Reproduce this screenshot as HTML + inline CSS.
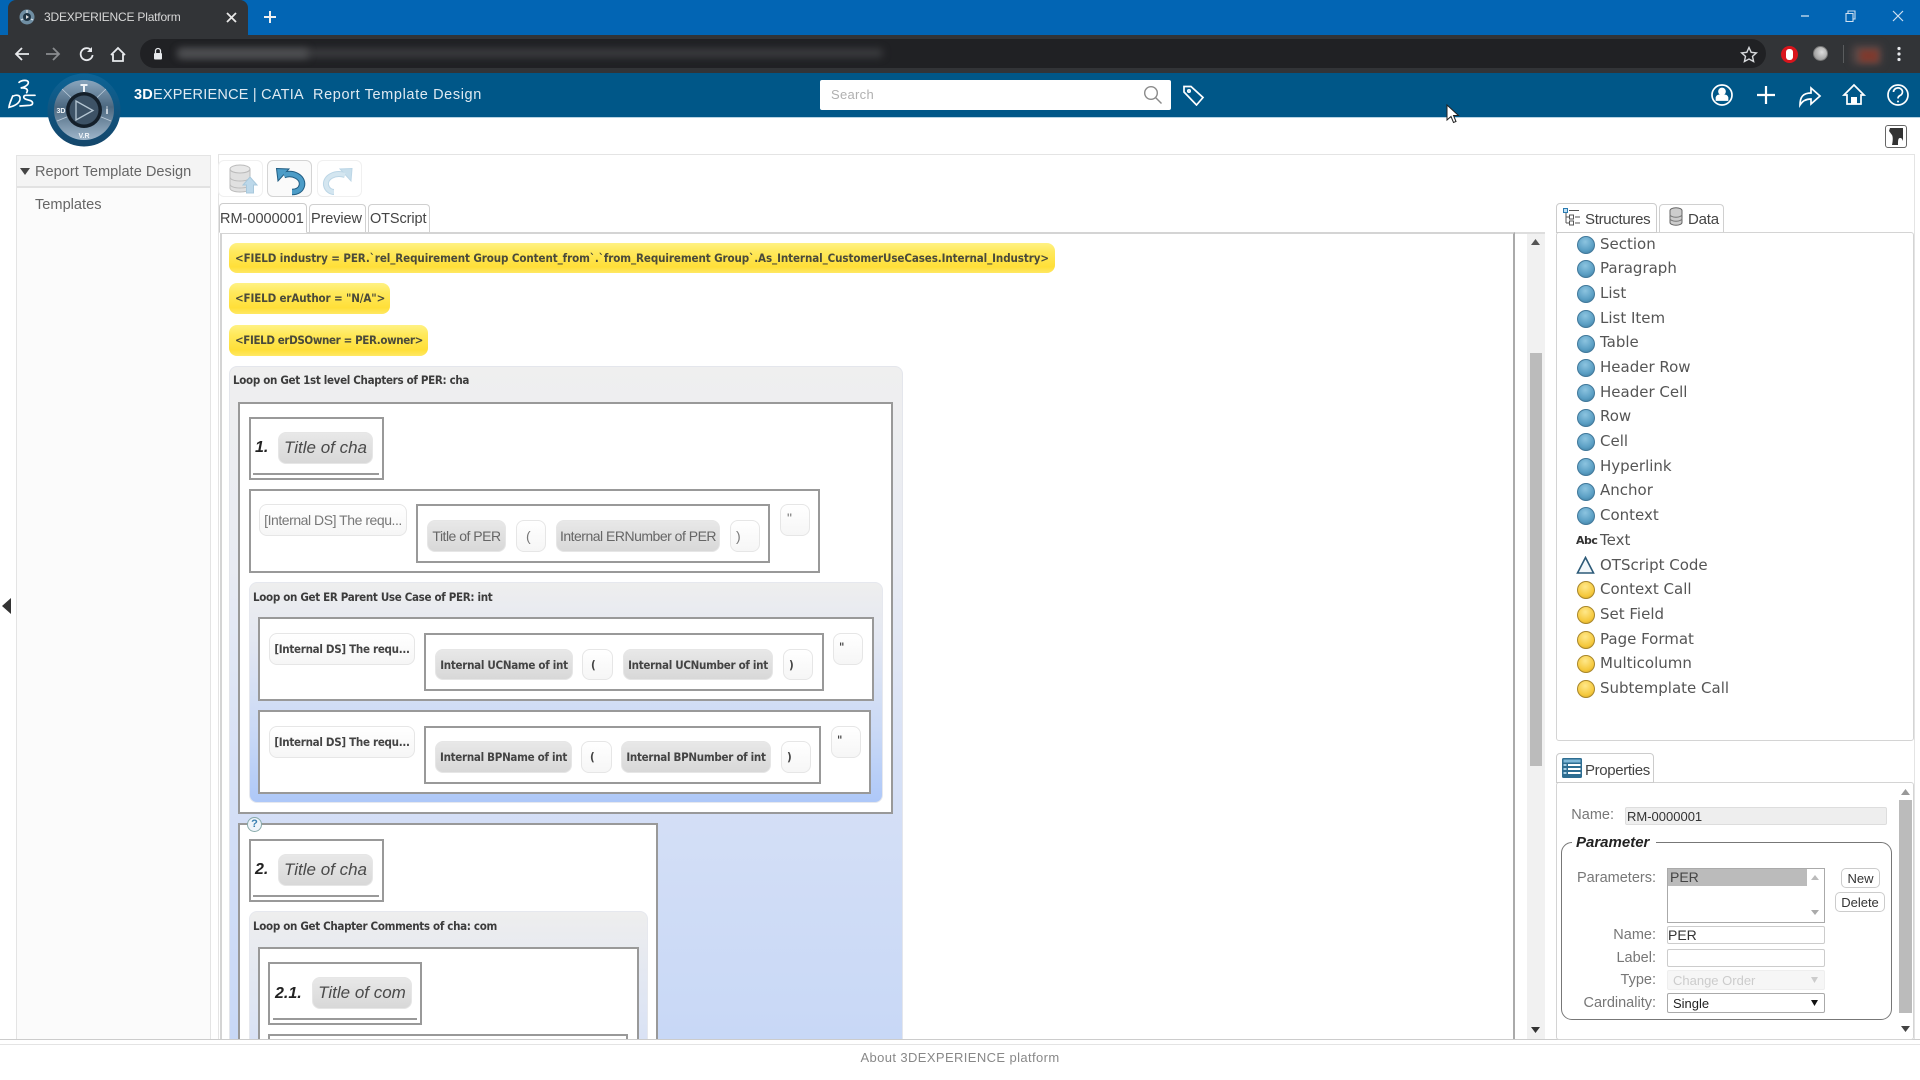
<!DOCTYPE html>
<html><head><meta charset="utf-8"><title>3DEXPERIENCE Platform</title>
<style>
html,body{margin:0;padding:0;width:1920px;height:1080px;overflow:hidden;background:#fff;font-family:"Liberation Sans",sans-serif}
div,span.a,svg.a{position:absolute;box-sizing:border-box;white-space:nowrap}
.cond{font-family:"DejaVu Sans Condensed","DejaVu Sans",sans-serif;font-stretch:condensed;font-weight:bold;font-size:11.5px;color:#3c3c3c;letter-spacing:-.32px}
.field{left:229px;border-radius:8px;background:linear-gradient(#fff284,#ffe95c 30%,#ffdf38 80%,#ffe864);padding-left:6px;line-height:30px;color:#4a4a3a}
.box{background:#fff;border:2px solid #999}
.pg{background:linear-gradient(#e8e8e8,#d8d8d8);border:1px solid #e6e6e6;border-radius:8px;text-align:center;color:#666;font-size:14px;line-height:30px;letter-spacing:-.5px}
.pw{background:linear-gradient(#fff,#f6f6f6);border:1px solid #e6e6e6;border-radius:8px;color:#777;font-size:14px;line-height:30px;letter-spacing:-.46px}
.pc{font-size:11.5px;color:#444;font-family:"DejaVu Sans Condensed","DejaVu Sans",sans-serif;font-stretch:condensed;font-weight:bold;letter-spacing:-.29px}
.tt{font:italic 17px/30px "Liberation Sans",sans-serif;color:#4a4a4a;text-align:center;letter-spacing:0}
.num{font:italic bold 16px/20px "Liberation Sans",sans-serif;color:#222}
.ul{height:2px;background:#999}
.tab{border:1px solid #d0d0d0;border-bottom:none;border-radius:4px 4px 0 0;background:#fff;font-size:14.5px;color:#444;padding-left:1px;letter-spacing:-.1px}
.li{left:1600px;font:15px/20px "DejaVu Sans",sans-serif;color:#555}
.b{left:1577px;width:18px;height:18px;border-radius:50%;background:radial-gradient(circle at 45% 30%,#8cc4e0,#5b9fc4 60%,#3a7699);border:1px solid #41789a}
.y{left:1577px;width:18px;height:18px;border-radius:50%;background:radial-gradient(circle at 45% 30%,#ffe88a,#f5c83c 65%,#c79a1c);border:1px solid #a8862a}
.lb{font-size:14.5px;color:#777;text-align:right;width:100px;left:1556px;line-height:18px}
.ip{left:1667px;width:158px;border:1px solid #ccc;border-radius:2px;background:#fff;font-size:14px;color:#333;padding-left:0}
</style></head><body>

<!-- Title bar -->
<div style="left:0;top:0;width:1920px;height:35px;background:#0265b4"></div>
<div style="left:8px;top:0;width:240px;height:35px;background:#323437;border-radius:8px 8px 0 0"></div>
<svg class="a" style="left:19px;top:9px" width="16" height="16" viewBox="0 0 16 16"><circle cx="8" cy="8" r="7.5" fill="#6f8ea3"/><circle cx="8" cy="8" r="4" fill="#1f3342"/><path d="M7 6v4l3-2z" fill="#ddd"/><path d="M8 1v3M2 11l2-1M14 11l-2-1" stroke="#dfe7ee" stroke-width="1.2"/></svg>
<div style="left:44px;top:9px;font-size:12px;line-height:17px;color:#d8d8d8;letter-spacing:-.2px">3DEXPERIENCE Platform</div>
<svg class="a" style="left:226px;top:12px" width="11" height="11"><path d="M1 1l9 9M10 1l-9 9" stroke="#e8e8e8" stroke-width="1.8"/></svg>
<svg class="a" style="left:264px;top:11px" width="12" height="12"><path d="M6 0v12M0 6h12" stroke="#f0f0f0" stroke-width="2"/></svg>
<svg class="a" style="left:1798px;top:9px" width="110" height="16" fill="none" stroke="#cfe0f0"><path d="M3 7h8" stroke-width="1.3"/><path d="M48 4.500h7v8h-7zM50 4.500v-2.500h7v8h-2" stroke-width="1.1"/><path d="M95 2l10 10M105 2l-10 10" stroke-width="1.2"/></svg>

<!-- Browser toolbar -->
<div style="left:0;top:35px;width:1920px;height:38px;background:#323437"></div>
<div style="left:140px;top:39px;width:1626px;height:29px;background:#202124;border-radius:15px"></div>
<svg class="a" style="left:12px;top:44px" width="120" height="20" fill="none" stroke="#e8eaed" stroke-width="1.8"><path d="M17 10H4M10 4l-6 6 6 6"/><path d="M34 10h13M41 4l6 6-6 6" stroke="#8a8c8f"/><path d="M79 6a6 6 0 1 0 1.600 5"/><path d="M80 3v5h-5" fill="#e8eaed" stroke="none"/><path d="M113 11l-7-7-7 7M101 10v7h10v-7"/></svg>
<svg class="a" style="left:153px;top:47px" width="10" height="13"><path d="M2.500 6V4a2.500 2.500 0 0 1 5 0v2" fill="none" stroke="#e8eaed" stroke-width="1.300"/><rect x="1" y="6" width="8" height="6.500" rx="1" fill="#e8eaed"/></svg>
<div style="left:178px;top:49px;width:705px;height:8px;background:#3e3f42;filter:blur(4px);border-radius:4px"></div>
<div style="left:178px;top:49px;width:130px;height:9px;background:#505154;filter:blur(4px)"></div>
<svg class="a" style="left:1740px;top:46px" width="18" height="17"><path d="M9 1.500l2.200 4.800 5.200.6-3.900 3.500 1.100 5.100L9 13l-4.600 2.500 1.100-5.100L1.600 6.900l5.200-.6z" fill="none" stroke="#d8dadd" stroke-width="1.400"/></svg>
<div style="left:1781px;top:46px;width:17px;height:17px;border-radius:50%;background:#d9141c"></div>
<div style="left:1786px;top:49px;width:7px;height:11px;border-radius:3px;background:#fff"></div>
<div style="left:1813px;top:46px;width:15px;height:15px;border-radius:50%;background:radial-gradient(circle at 60% 40%,#ddd,#888);border:1px solid #777"></div>
<div style="left:1843px;top:45px;width:1px;height:18px;background:#5a5c5f"></div>
<div style="left:1853px;top:46px;width:28px;height:18px;background:#5e4a48;filter:blur(4px)"></div>
<div style="left:1860px;top:50px;width:18px;height:12px;background:#7e3a2e;filter:blur(3px)"></div>
<svg class="a" style="left:1897px;top:46px" width="4" height="16"><circle cx="2" cy="2.500" r="1.600" fill="#e8eaed"/><circle cx="2" cy="8" r="1.600" fill="#e8eaed"/><circle cx="2" cy="13.500" r="1.600" fill="#e8eaed"/></svg>

<!-- App header -->
<div style="left:0;top:73px;width:1920px;height:44px;background:#005788"></div>
<div style="left:0;top:117px;width:1920px;height:1px;background:#b7d3e3"></div>
<svg class="a" style="left:0;top:70px" width="44" height="47" viewBox="0 0 132 141" fill="none" stroke="#fff" stroke-width="5" stroke-linecap="round"><path d="M57 37C65 30 85 28 85 38C85 46 72 52 62 54C78 52 86 58 80 68"/><path d="M40 78C50 74 62 74 60 88C58 100 42 108 27 112C28 100 34 90 38 78"/><path d="M105 76L78 76C70 76 68 84 78 88L92 92C100 96 100 104 90 106L60 108"/></svg>
<svg class="a" style="left:46px;top:73px" width="76" height="76" viewBox="0 0 76 76">
<defs><linearGradient id="o" x1="0" y1="0" x2="0" y2="1"><stop offset="0" stop-color="#0d6496"/><stop offset="1" stop-color="#14466a"/></linearGradient><linearGradient id="d" x1="0" y1="0" x2="0" y2="1"><stop offset="0" stop-color="#8aa6be"/><stop offset=".45" stop-color="#4c6880"/><stop offset="1" stop-color="#9fb6ca"/></linearGradient></defs>
<circle cx="38" cy="37" r="36.500" fill="url(#o)"/><circle cx="38" cy="37" r="30" fill="url(#d)"/>
<path d="M38 37L60 16M38 37L16 16M38 37L11 48M38 37L65 48" stroke="#c0d0de" stroke-width=".7"/>
<circle cx="38" cy="37" r="18" fill="#141f2a"/><circle cx="38" cy="37" r="14.500" fill="#3d5266"/><path d="M30 28v19l17-9.500z" fill="#3d5266" stroke="#b6c7d4" stroke-width="1.300"/>
<text x="15" y="40" font-family="Liberation Sans" font-size="7" font-weight="bold" fill="#f0f4f8" text-anchor="middle">3D</text><text x="61" y="41" font-family="Liberation Sans" font-size="10" font-weight="bold" fill="#f0f4f8" text-anchor="middle">i</text><text x="38" y="65" font-family="Liberation Sans" font-size="7" font-weight="bold" fill="#f0f4f8" text-anchor="middle">V.R</text><path d="M38 11v8M34.500 12h7" stroke="#eef3f7" stroke-width="2"/></svg>
<div style="left:134px;top:85px;font-size:14.5px;line-height:20px;color:#dfeaf2;letter-spacing:.22px"><b style="color:#fff">3D</b>EXPERIENCE | CATIA</div>
<div style="left:313px;top:85px;font-size:14.5px;line-height:20px;color:#dfeaf2;letter-spacing:.62px">Report Template Design</div>
<div style="left:820px;top:80px;width:351px;height:30px;background:#fff;border-radius:2px;font-size:13px;line-height:30px;color:#b0b0b0;padding-left:11px;letter-spacing:.3px">Search</div>
<svg class="a" style="left:1143px;top:85px" width="20" height="20" fill="none" stroke="#8a8a8a" stroke-width="1.400"><circle cx="8" cy="8" r="6.300"/><path d="M12.500 12.500l6 6"/></svg>
<svg class="a" style="left:1182px;top:83px" width="23" height="23" fill="none" stroke="#fff" stroke-width="1.700"><path d="M2 8V2.500h7l12 11-6.500 7.500z" transform="translate(0 1)"/><circle cx="7" cy="8" r="1.200"/></svg>
<svg class="a" style="left:1710px;top:82px" width="200" height="26" fill="none" stroke="#fff" stroke-width="1.700">
<circle cx="12" cy="13" r="10"/><circle cx="12" cy="9.500" r="3" fill="#fff"/><path d="M6.500 18v-2.500a3 3 0 0 1 3-2h5a3 3 0 0 1 3 2V18z" fill="#fff"/>
<path d="M56 4v18M47 13h18" stroke-width="2.200"/>
<path d="M90 23c0-8 3-12 11-12V6l9 8-9 8v-5c-4 0-8 1-11 6z"/>
<path d="M134 13l10-10 10 10h-3v9h-14v-9z"/><rect x="141" y="15" width="6" height="7" fill="#fff" stroke="none"/>
<circle cx="188" cy="13" r="10"/><path d="M183.500 10a4.500 4 0 1 1 6.500 3.500c-1.300.8-2 1.500-2 3"/><circle cx="188" cy="19.500" r="1" fill="#fff" stroke="none"/></svg>
<svg class="a" style="left:1446px;top:104px" width="14" height="21"><path d="M1 1v15l4-3.500 2.500 6 2.500-1-2.500-6H12.500z" fill="#fff" stroke="#222" stroke-width="1"/></svg>

<!-- Page chrome -->
<div style="left:1885px;top:125px;width:22px;height:23px;border:1.500px solid #666;border-radius:3px;background:#fff"></div>
<svg class="a" style="left:1889px;top:128px" width="15" height="18"><path d="M1 0h13v13c-1-2-1-3-3-3s-2 3-2 7H3c1-5 1-8 0-10L0 3z" fill="#333"/></svg>

<!-- Left panel -->
<div style="left:16px;top:155px;width:195px;height:889px;background:#fbfbfb;border:1px solid #e4e4e4;border-bottom:none"></div>
<div style="left:17px;top:156px;width:193px;height:32px;background:#f4f4f4;border-bottom:2px solid #e2e2e2"></div>
<svg class="a" style="left:20px;top:168px" width="11" height="8"><path d="M0 0h10L5 7z" fill="#444"/></svg>
<div style="left:35px;top:163px;font-size:14.6px;line-height:19px;color:#666">Report Template Design</div>
<div style="left:35px;top:196px;font-size:14.6px;line-height:19px;color:#666">Templates</div>
<svg class="a" style="left:2px;top:598px" width="9" height="16"><path d="M9 0v16L0 8z" fill="#333"/></svg>

<!-- Center panel -->
<div style="left:218px;top:154px;width:1697px;height:890px;background:#fff;border:1px solid #e4e4e4;border-bottom:none"></div>
<div style="left:218px;top:160px;width:45px;height:37px;border:1px solid #f0f0f0;border-radius:6px"></div>
<div style="left:267px;top:160px;width:45px;height:37px;border:1px solid #d4d4d4;border-radius:6px;background:#fafafa"></div>
<div style="left:317px;top:160px;width:45px;height:37px;border:1px solid #f0f0f0;border-radius:6px"></div>
<svg class="a" style="left:210px;top:150px" width="170" height="60" viewBox="210 150 170 60">
<ellipse cx="240" cy="169" rx="10" ry="4" fill="#e8e8e8" stroke="#bbb"/><path d="M230 169v19c0 2.500 4.500 4 10 4s10-1.500 10-4v-19c0 2.500-4.500 4-10 4s-10-1.500-10-4z" fill="#e0e0e0" stroke="#bbb"/><path d="M230 177c0 2.500 4.500 4 10 4s10-1.500 10-4M230 184c0 2.500 4.500 4 10 4s10-1.500 10-4" fill="none" stroke="#bbb"/>
<path d="M250 177l7 8h-3.500v8h-7v-8H243z" fill="#bcd8ea" stroke="#a8c8dc"/>
<path d="M284 175C293 172 303 177 302 185C301 190 297 192 292 192" fill="none" stroke="#1f5c82" stroke-width="6.500"/>
<path d="M276.500 168.500L289 169L278 181z" fill="#4c9cc7" stroke="#1f5c82"/>
<path d="M284 175C293 172 303 177 302 185C301 190 297 192 292 192" fill="none" stroke="#4c9cc7" stroke-width="4.500"/>
<path d="M345 175C335 172 325 177 326 185C327 190 331 192 334 192" fill="none" stroke="#bcd6e6" stroke-width="6"/>
<path d="M352 168.500L340 169L351 181z" fill="#c8dfec" stroke="#bcd6e6"/>
<path d="M345 175C335 172 325 177 326 185C327 190 331 192 334 192" fill="none" stroke="#d4e6f0" stroke-width="4"/>
</svg>

<div class="tab" style="left:219px;top:203px;width:88px;height:30px;line-height:31px;border-color:#ccc;z-index:2;border-bottom:1px solid #fff;padding-left:0;letter-spacing:0">RM-0000001</div>
<div class="tab" style="left:309px;top:204px;width:57px;height:28px;line-height:29px">Preview</div>
<div class="tab" style="left:368px;top:204px;width:62px;height:28px;line-height:29px">OTScript</div>

<!-- Content frame -->
<div style="left:220px;top:232px;width:1295px;height:808px;border-top:2px solid #d4d4d4;border-left:2px solid #d4d4d4;border-right:2px solid #aaa"></div>
<div style="left:1515px;top:232px;width:30px;height:808px;background:#fff;border-top:2px solid #ddd"></div>
<div style="left:1527px;top:234px;width:18px;height:806px;background:#f1f1f1"></div>
<svg class="a" style="left:1531px;top:239px" width="10" height="7"><path d="M0 6h9L4.500 0z" fill="#555"/></svg>
<div style="left:1530px;top:353px;width:12px;height:413px;background:#bbb"></div>
<svg class="a" style="left:1531px;top:1027px" width="10" height="7"><path d="M0 0h9L4.500 6z" fill="#333"/></svg>

<div class="cond field" style="top:243px;width:826px;height:30px;letter-spacing:-.09px">&lt;FIELD industry = PER.`rel_Requirement Group Content_from`.`from_Requirement Group`.As_Internal_CustomerUseCases.Internal_Industry&gt;</div>
<div class="cond field" style="top:283px;width:161px;height:31px;letter-spacing:-.13px">&lt;FIELD erAuthor = "N/A"&gt;</div>
<div class="cond field" style="top:325px;width:199px;height:31px;letter-spacing:-.38px">&lt;FIELD erDSOwner = PER.owner&gt;</div>

<!-- Outer loop -->
<div style="left:229px;top:366px;width:674px;height:673px;border-radius:8px 8px 0 0;background:linear-gradient(#efefef 0,#e8ebf3 30%,#d6e0f6 60%,#c8d8f6 100%);border:1px solid #e4e6ec;border-bottom:none"></div>
<div class="cond" style="left:233px;top:372px;line-height:16px">Loop on Get 1st level Chapters of PER: cha</div>

<div class="box" style="left:238px;top:402px;width:655px;height:412px"></div>
<div class="box" style="left:249px;top:417px;width:135px;height:63px"></div>
<div class="num" style="left:255px;top:438px">1.</div>
<div class="pg tt" style="left:278px;top:432px;width:95px;height:32px">Title of cha</div>
<div class="ul" style="left:253px;top:473px;width:126px"></div>

<div class="box" style="left:249px;top:489px;width:571px;height:84px"></div>
<div class="pw" style="left:259px;top:504px;width:148px;height:32px;text-align:center">[Internal DS] The requ...</div>
<div class="box" style="left:416px;top:504px;width:354px;height:59px"></div>
<div class="pg" style="left:427px;top:520px;width:79px;height:32px">Title of PER</div>
<div class="pw" style="left:516px;top:520px;width:30px;height:32px;padding-left:9px">(</div>
<div class="pg" style="left:556px;top:520px;width:164px;height:32px">Internal ERNumber of PER</div>
<div class="pw" style="left:730px;top:520px;width:30px;height:32px;padding-left:5px">)</div>
<div class="pw" style="left:780px;top:504px;width:30px;height:32px;padding-left:6px;line-height:26px">"</div>

<!-- Inner loop ER -->
<div style="left:249px;top:582px;width:634px;height:221px;border-radius:8px;background:linear-gradient(#eeeeee 0,#e4e8f2 25%,#c8d8f6 70%,#aec8f8 100%);border:1px solid #e6e8ee"></div>
<div class="cond" style="left:253px;top:589px;line-height:16px">Loop on Get ER Parent Use Case of PER: int</div>

<div class="box" style="left:258px;top:617px;width:616px;height:84px"></div>
<div class="pw pc" style="left:269px;top:633px;width:146px;height:32px;text-align:center">[Internal DS] The requ...</div>
<div class="box" style="left:424px;top:633px;width:400px;height:58px"></div>
<div class="pg pc" style="left:435px;top:649px;width:138px;height:31px">Internal UCName of int</div>
<div class="pw pc" style="left:582px;top:649px;width:31px;height:31px;padding-left:8px">(</div>
<div class="pg pc" style="left:623px;top:649px;width:150px;height:31px">Internal UCNumber of int</div>
<div class="pw pc" style="left:783px;top:649px;width:30px;height:31px;padding-left:5px">)</div>
<div class="pw pc" style="left:833px;top:633px;width:30px;height:32px;padding-left:5px;line-height:26px">"</div>

<div class="box" style="left:258px;top:710px;width:613px;height:84px"></div>
<div class="pw pc" style="left:269px;top:726px;width:146px;height:32px;text-align:center">[Internal DS] The requ...</div>
<div class="box" style="left:424px;top:726px;width:397px;height:58px"></div>
<div class="pg pc" style="left:435px;top:741px;width:137px;height:32px">Internal BPName of int</div>
<div class="pw pc" style="left:581px;top:741px;width:31px;height:32px;padding-left:8px">(</div>
<div class="pg pc" style="left:621px;top:741px;width:150px;height:32px">Internal BPNumber of int</div>
<div class="pw pc" style="left:781px;top:741px;width:30px;height:32px;padding-left:5px">)</div>
<div class="pw pc" style="left:831px;top:726px;width:30px;height:32px;padding-left:5px;line-height:26px">"</div>

<!-- Second chapter -->
<div class="box" style="left:238px;top:823px;width:420px;height:216px;border-bottom:none"></div>
<div style="left:247px;top:817px;width:15px;height:15px;border-radius:50%;background:#eef4fa;border:1.500px solid #8aa;color:#3a7fb0;font:bold 11px/12px 'Liberation Sans',sans-serif;text-align:center">?</div>
<div class="box" style="left:249px;top:839px;width:135px;height:63px"></div>
<div class="num" style="left:255px;top:860px">2.</div>
<div class="pg tt" style="left:278px;top:854px;width:95px;height:32px">Title of cha</div>
<div class="ul" style="left:253px;top:895px;width:126px"></div>
<div style="left:249px;top:911px;width:399px;height:128px;border-radius:8px 8px 0 0;background:linear-gradient(#eeeeee,#d9e2f5);border:1px solid #e6e8ee;border-bottom:none"></div>
<div class="cond" style="left:253px;top:918px;line-height:16px">Loop on Get Chapter Comments of cha: com</div>
<div class="box" style="left:258px;top:947px;width:381px;height:92px;border-bottom:none"></div>
<div class="box" style="left:268px;top:962px;width:154px;height:63px"></div>
<div class="num" style="left:275px;top:984px">2.1.</div>
<div class="pg tt" style="left:312px;top:977px;width:100px;height:32px">Title of com</div>
<div class="ul" style="left:273px;top:1018px;width:144px"></div>
<div class="box" style="left:268px;top:1034px;width:360px;height:5px;border-bottom:none"></div>

<!-- Bottom lines -->
<div style="left:0;top:1039px;width:1920px;height:41px;background:#fff;border-top:1px solid #ccc"></div>
<div style="left:0;top:1044px;width:1920px;height:1px;background:#e4e4e4"></div>
<div style="left:0;top:1049px;width:1920px;text-align:center;font-size:13px;line-height:18px;color:#888;letter-spacing:.39px">About 3DEXPERIENCE platform</div>

<!-- Right: Structures -->
<div style="left:1556px;top:232px;width:358px;height:509px;border:1px solid #d4d4d4;border-radius:3px;background:#fff"></div>
<div class="tab" style="left:1556px;top:203px;width:101px;height:30px;border-bottom:1px solid #fff;border-color:#ccc"></div>
<svg class="a" style="left:1563px;top:208px" width="19" height="18" fill="none" stroke="#555"><rect x=".5" y=".5" width="4" height="4" stroke="#2a7ab0" fill="#bfe0f5"/><path d="M6 2.500h10M3 5v10M3 9h3M3 15h3M12 9h5M12 15h5"/><rect x="6.500" y="7" width="4" height="4"/><rect x="6.500" y="13" width="4" height="4"/></svg>
<div style="left:1585px;top:209px;font-size:15px;line-height:21px;color:#444;letter-spacing:-.3px">Structures</div>
<div class="tab" style="left:1659px;top:204px;width:65px;height:28px"></div>
<svg class="a" style="left:1669px;top:207px" width="14" height="19"><ellipse cx="7" cy="3.500" rx="6" ry="2.800" fill="#ccc" stroke="#666"/><path d="M1 3.500v12c0 1.500 2.700 2.800 6 2.800s6-1.300 6-2.800v-12" fill="#ccc" stroke="#666"/><path d="M1 7.500c0 1.500 2.700 2.800 6 2.800s6-1.300 6-2.800M1 11.500c0 1.500 2.700 2.800 6 2.800s6-1.300 6-2.800" fill="none" stroke="#777"/></svg>
<div style="left:1688px;top:209px;font-size:15px;line-height:21px;color:#444;letter-spacing:-.2px">Data</div>

<div class="b" style="top:236px"></div><div class="li" style="top:234px">Section</div>
<div class="b" style="top:260px"></div><div class="li" style="top:258px">Paragraph</div>
<div class="b" style="top:285px"></div><div class="li" style="top:283px">List</div>
<div class="b" style="top:310px"></div><div class="li" style="top:308px">List Item</div>
<div class="b" style="top:335px"></div><div class="li" style="top:332px">Table</div>
<div class="b" style="top:359px"></div><div class="li" style="top:357px">Header Row</div>
<div class="b" style="top:384px"></div><div class="li" style="top:382px">Header Cell</div>
<div class="b" style="top:409px"></div><div class="li" style="top:406px">Row</div>
<div class="b" style="top:433px"></div><div class="li" style="top:431px">Cell</div>
<div class="b" style="top:458px"></div><div class="li" style="top:456px">Hyperlink</div>
<div class="b" style="top:483px"></div><div class="li" style="top:480px">Anchor</div>
<div class="b" style="top:507px"></div><div class="li" style="top:505px">Context</div>
<div style="left:1576px;top:534px;font:bold 11px/14px 'DejaVu Sans',sans-serif;color:#333;letter-spacing:-.5px">Abc</div><div class="li" style="top:530px">Text</div>
<svg class="a" style="left:1576px;top:556px" width="19" height="18"><path d="M9.500 1.500L17.500 17h-16z" fill="#f2f7fa" stroke="#2c5a78" stroke-width="1.600"/></svg><div class="li" style="top:555px">OTScript Code</div>
<div class="y" style="top:581px"></div><div class="li" style="top:579px">Context Call</div>
<div class="y" style="top:606px"></div><div class="li" style="top:604px">Set Field</div>
<div class="y" style="top:631px"></div><div class="li" style="top:629px">Page Format</div>
<div class="y" style="top:655px"></div><div class="li" style="top:653px">Multicolumn</div>
<div class="y" style="top:680px"></div><div class="li" style="top:678px">Subtemplate Call</div>

<!-- Right: Properties -->
<div style="left:1556px;top:782px;width:358px;height:258px;border:1px solid #d4d4d4;border-radius:3px;background:#fff"></div>
<div class="tab" style="left:1556px;top:753px;width:98px;height:30px;border-bottom:1px solid #fff;border-color:#ccc"></div>
<svg class="a" style="left:1562px;top:758px" width="20" height="20"><rect width="20" height="20" rx="1.500" fill="#2e6d91"/><rect x="1.500" y="1.500" width="17" height="3" fill="#7fb8d8"/><path d="M6 7h12.500M6 11h12.500M6 15h12.500" stroke="#fff" stroke-width="2"/><path d="M1.500 7h3M1.500 11h3M1.500 15h3" stroke="#a8d0e6" stroke-width="2"/></svg>
<div style="left:1585px;top:761px;font-size:15px;line-height:20px;color:#444;letter-spacing:-.35px">Properties</div>

<svg class="a" style="left:1901px;top:789px" width="10" height="7"><path d="M0 6h9L4.500 0z" fill="#999"/></svg>
<div style="left:1899px;top:800px;width:13px;height:213px;background:#bbb"></div>
<svg class="a" style="left:1901px;top:1026px" width="10" height="6"><path d="M0 0h9L4.500 6z" fill="#444"/></svg>

<div class="lb" style="left:1514px;top:806px">Name:</div>
<div style="left:1625px;top:807px;width:262px;height:18px;background:#eee;border:1px solid #ddd;border-radius:2px;font-size:13px;line-height:17px;color:#333;padding-left:1px">RM-0000001</div>

<div style="left:1561px;top:842px;width:331px;height:178px;border:1.500px solid #777;border-radius:11px"></div>
<div style="left:1572px;top:833px;background:#fff;padding:0 7px 0 4px;font:italic bold 15px/20px 'Liberation Sans',sans-serif;color:#222">Parameter</div>

<div class="lb" style="top:869px">Parameters:</div>
<div style="left:1667px;top:868px;width:158px;height:55px;border:1px solid #aaa;background:#fff"></div>
<div style="left:1668px;top:869px;width:139px;height:17px;background:#bbb;font-size:14px;line-height:17px;color:#444;padding-left:2px">PER</div>
<svg class="a" style="left:1811px;top:875px" width="8" height="5"><path d="M0 5h8L4 0z" fill="#bbb"/></svg>
<svg class="a" style="left:1811px;top:910px" width="8" height="5"><path d="M0 0h8L4 5z" fill="#aaa"/></svg>
<div style="left:1841px;top:868px;width:39px;height:20px;border:1px solid #ccc;border-radius:5px;font-size:13px;line-height:19px;text-align:center;color:#333">New</div>
<div style="left:1835px;top:892px;width:50px;height:20px;border:1px solid #ccc;border-radius:5px;font-size:13px;line-height:19px;text-align:center;color:#333">Delete</div>

<div class="lb" style="top:926px">Name:</div>
<div class="ip" style="top:926px;height:18px;line-height:17px">PER</div>
<div class="lb" style="top:949px">Label:</div>
<div class="ip" style="top:949px;height:18px"></div>
<div class="lb" style="top:971px">Type:</div>
<div class="ip" style="top:970px;height:20px;line-height:19px;background:#f6f6f6;border-color:#eee;color:#ccc;font-size:13px;padding-left:5px">Change Order</div>
<svg class="a" style="left:1811px;top:977px" width="7" height="6"><path d="M0 0h7L3.500 6z" fill="#ccc"/></svg>
<div class="lb" style="top:994px">Cardinality:</div>
<div class="ip" style="top:993px;height:20px;line-height:19px;border-color:#aaa;font-size:13px;padding-left:5px;color:#222">Single</div>
<svg class="a" style="left:1811px;top:1000px" width="7" height="6"><path d="M0 0h7L3.500 6z" fill="#111"/></svg>
</body></html>
